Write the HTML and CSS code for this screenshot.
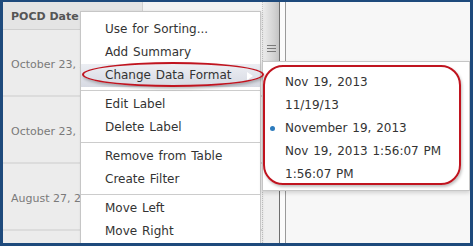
FILE: index.html
```html
<!DOCTYPE html>
<html lang="en">
<head>
  <meta charset="UTF-8" />
  <title>Change Data Format</title>
  <link rel="stylesheet" href="styles.css">
</head>
<body>
  <div class="frame">
    <!-- table behind the menu -->
    <div class="table">
      <div class="row head">
        <div class="cell first">POCD Date</div>
        <div class="cell"></div>
      </div>
      <div class="row">
        <div class="cell first">October 23, 2013</div>
        <div class="cell"></div>
      </div>
      <div class="row">
        <div class="cell first">October 23, 2013</div>
        <div class="cell"></div>
      </div>
      <div class="row">
        <div class="cell first">August 27, 2013</div>
        <div class="cell"></div>
      </div>
      <div class="row">
        <div class="cell first"></div>
        <div class="cell"></div>
      </div>
    </div>
    <div class="scroll">
      <div class="thumb"><span class="grip"></span></div>
    </div>
    <div class="split"></div>
    <div class="panel"></div>

    <!-- context menu -->
    <ul class="menu">
      <li>Use for Sorting...</li>
      <li>Add Summary</li>
      <li class="active">Change Data Format<span class="arrow"></span></li>
      <li class="sep"></li>
      <li>Edit Label</li>
      <li>Delete Label</li>
      <li class="sep"></li>
      <li>Remove from Table</li>
      <li>Create Filter</li>
      <li class="sep"></li>
      <li>Move Left</li>
      <li>Move Right</li>
    </ul>

    <ul class="menu sub">
      <li>Nov 19, 2013</li>
      <li>11/19/13</li>
      <li class="checked">November 19, 2013</li>
      <li>Nov 19, 2013 1:56:07 PM</li>
      <li>1:56:07 PM</li>
    </ul>

    <!-- red annotations -->
    <div class="mark oval"></div>
    <div class="mark box"></div>
  </div>
</body>
</html>
```

FILE: styles.css
```css
body {
  margin: 0;
  font-family: 'DejaVu Sans', Verdana, sans-serif;
}
.frame {
  position: relative;
  display: flex;
  width: 467px;
  height: 241px;
  border-style: solid;
  border-color: #1e4a7c;
  border-width: 2px 3px 3px 3px;
  overflow: hidden;
  background: #f7f7f7;
}
.table {
  width: 259px;
  flex: none;
  background: #fff;
}
.row {
  display: flex;
  height: 65px;
  border-bottom: 2px solid #dcdcdc;
}
.row.head {
  height: 27px;
  border-bottom: 1px solid #cfcfcf;
  background: #e4e4e4;
}
.cell {
  flex: 1;
  display: flex;
  align-items: center;
  padding: 3px 0 0 8px;
  font-size: 11px;
  color: #7a7a7a;
  white-space: nowrap;
  overflow: hidden;
}
.cell.first {
  flex: none;
  width: 131px;
  background: #ececec;
  border-right: 1px solid #d0d0d0;
}
.head .cell {
  padding-top: 1px;
  font-weight: bold;
  color: #555;
  background: #f3f3f3;
}
.head .cell.first {
  background: #e4e4e4;
}
.scroll {
  width: 16px;
  flex: none;
  background: #efefef;
  border-left: 1px dotted #c4c4c4;
}
.thumb {
  height: 110px;
  display: flex;
  justify-content: center;
  padding-top: 43px;
  box-sizing: border-box;
  background: linear-gradient(to right, #ececec, #d2d2d2 70%, #c4c4c4);
}
.grip {
  width: 9px;
  height: 9px;
  background: repeating-linear-gradient(#7a7a7a 0, #7a7a7a 1px, transparent 1px, transparent 3px);
}
.split {
  width: 5px;
  flex: none;
  background: #fbfbfb;
  border-left: 1px solid #6e6e6e;
  border-right: 1px solid #9a9a9a;
}
.panel {
  flex: 1;
  background: #f7f7f7;
}
.menu {
  position: absolute;
  left: 77px;
  top: 9px;
  width: 179px;
  margin: 0;
  padding: 6px 0 20px;
  list-style: none;
  background: #fff;
  border: 1px solid #c6c6c6;
  box-shadow: 1px 1px 3px rgba(0, 0, 0, 0.12);
  font-size: 12px;
  color: #333;
}
.menu li {
  position: relative;
  height: 23px;
  line-height: 23px;
  padding-left: 24px;
  word-spacing: 1px;
}
.menu li.sep {
  height: 1px;
  padding: 0;
  margin: 3px 0 2px;
  background: #cccccc;
}
.menu li.active {
  background: linear-gradient(#eceef3, #d7dae3);
}
.arrow {
  position: absolute;
  right: 7px;
  top: 8px;
  border-left: 6px solid #fff;
  border-top: 4px solid transparent;
  border-bottom: 4px solid transparent;
}
.menu.sub {
  left: 259px;
  top: 59px;
  width: 206px;
  padding: 9px 0 4px;
  box-shadow: 0 2px 4px rgba(0, 0, 0, 0.15);
}
.menu.sub li {
  padding-left: 22px;
}
.menu li.checked::before {
  content: "";
  position: absolute;
  left: 7px;
  top: 9px;
  width: 5px;
  height: 5px;
  border-radius: 50%;
  background: #2d7bbd;
}
.mark {
  position: absolute;
  border: 2px solid #c0141f;
  box-sizing: border-box;
  box-shadow: 1px 2px 3px rgba(0, 0, 0, 0.25);
}
.oval {
  left: 79px;
  top: 60px;
  width: 182px;
  height: 25px;
  border-radius: 50%;
}
.box {
  left: 260px;
  top: 63px;
  width: 198px;
  height: 120px;
  border-radius: 20px;
}
```
